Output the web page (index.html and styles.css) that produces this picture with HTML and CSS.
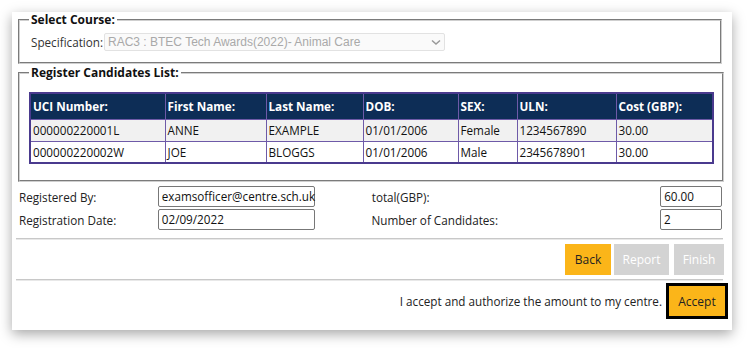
FILE: index.html
```html
<!DOCTYPE html>
<html>
<head>
<meta charset="utf-8">
<link rel="stylesheet" href="styles.css">
</head>
<body>
<div class="card">
  <fieldset class="fs fs-course">
    <legend>Select Course:</legend>
    <div class="spec-row">
      <span class="spec-label">Specification:</span>
      <div class="select">
        <span>RAC3 : BTEC Tech Awards(2022)- Animal Care</span>
        <svg width="10" height="7" viewBox="0 0 10 7"><path d="M1 1.5 L5 5 L9 1.5" fill="none" stroke="#999" stroke-width="1.5"/></svg>
      </div>
    </div>
  </fieldset>
  <fieldset class="fs fs-list">
    <legend>Register Candidates List:</legend>
    <table class="cand">
      <colgroup>
        <col style="width:135px"><col style="width:101px"><col style="width:97px"><col style="width:95px"><col style="width:59px"><col style="width:99px"><col style="width:97px">
      </colgroup>
      <thead>
        <tr><th>UCI Number:</th><th>First Name:</th><th>Last Name:</th><th>DOB:</th><th>SEX:</th><th>ULN:</th><th>Cost (GBP):</th></tr>
      </thead>
      <tbody>
        <tr class="alt"><td>000000220001L</td><td>ANNE</td><td>EXAMPLE</td><td>01/01/2006</td><td>Female</td><td>1234567890</td><td>30.00</td></tr>
        <tr><td>000000220002W</td><td>JOE</td><td>BLOGGS</td><td>01/01/2006</td><td>Male</td><td>2345678901</td><td>30.00</td></tr>
      </tbody>
    </table>
  </fieldset>
  <div class="info">
    <div class="info-row">
      <span class="lbl">Registered By:</span>
      <span class="inp inp-wide">examsofficer@centre.sch.uk</span>
      <span class="lbl lbl2">total(GBP):</span>
      <span class="inp inp-narrow">60.00</span>
    </div>
    <div class="info-row">
      <span class="lbl">Registration Date:</span>
      <span class="inp inp-wide">02/09/2022</span>
      <span class="lbl lbl2">Number of Candidates:</span>
      <span class="inp inp-narrow">2</span>
    </div>
  </div>
  <div class="rule"></div>
  <div class="btn-row">
    <button class="btn btn-primary">Back</button>
    <button class="btn btn-disabled btn-report">Report</button>
    <button class="btn btn-disabled btn-finish">Finish</button>
  </div>
  <div class="rule rule2"></div>
  <div class="accept-row">
    <span class="accept-text">I accept and authorize the amount to my centre.</span>
    <button class="btn btn-primary btn-accept">Accept</button>
  </div>
</div>
</body>
</html>
```
FILE: styles.css
```css
* { box-sizing: border-box; }
html, body { margin: 0; padding: 0; background: #fff; }
body {
  font-family: "Open Sans", "Liberation Sans", sans-serif;
  font-size: 11.7px;
  color: #222;
  width: 750px;
  height: 348px;
  overflow: hidden;
}
.card {
  margin: 12px 0 0 12px;
  width: 720px;
  height: 318px;
  background: #fff;
  box-shadow: 0 4px 12px rgba(0,0,0,0.35);
  padding: 0 10px 0 6px;
}
.fs {
  margin: 0;
  border: 2px groove #cfcfcf;
  padding: 0;
}
.fs legend {
  font-weight: bold;
  font-size: 12px;
  line-height: 16px;
  padding: 0 2px;
  margin-left: 9px;
  color: #111;
}
.fs-course {
  height: 52px;
}
.spec-row {
  display: flex;
  align-items: center;
  padding: 5px 0 0 11px;
  color: #333;
}
.spec-label { width: 73px; }
.select {
  width: 341px;
  height: 18px;
  border: 1px solid #e2e2e2;
  border-radius: 2px;
  background: #fafafa;
  display: flex;
  align-items: center;
  justify-content: space-between;
  padding: 0 3px 0 3px;
  font-family: "Liberation Sans", Arial, sans-serif;
  font-size: 12px;
  color: #a9a9a9;
}
.fs-list {
  margin-top: 1px;
  height: 117px;
  padding: 11px 8px 0 9px;
}
.fs-list legend { margin-left: 0; }
.cand {
  border-collapse: collapse;
  border: 2px solid #4a3a8e;
  width: 683px;
  table-layout: fixed;
}
.cand th, .cand td {
  border: 1px solid #6e5aa8;
  text-align: left;
  padding: 0 2px;
  white-space: nowrap;
  overflow: hidden;
}
.cand th {
  background: #0d2d56;
  color: #fff;
  font-weight: bold;
  height: 26px;
}
.cand td { height: 22px; color: #111; }
.cand tr.alt td { background: #f1f1f1; }
.info {
  padding: 4px 0 0 1px;
  display: flex;
  flex-direction: column;
  gap: 2px;
}
.info-row {
  display: flex;
  align-items: center;
  height: 21px;
}
.lbl { width: 139px; color: #222; }
.lbl2 { width: 289px; margin-left: 57px; }
.inp {
  height: 21px;
  border: 1px solid #777;
  border-radius: 2px;
  padding: 0 1px 0 3px;
  line-height: 19px;
  color: #111;
  white-space: nowrap;
  overflow: visible;
}
.inp-wide { width: 157px; }
.inp-narrow { width: 62px; }
.rule {
  margin: 8px 0 0 -2px;
  width: 707px;
  height: 2px;
  background: #c8c8c8;
  border-bottom: 1px solid #e8e8e8;
}
.btn-row {
  display: flex;
  justify-content: flex-end;
  padding: 4px 0 0 0;
  width: 706px;
  height: 37px;
}
.btn {
  font-family: "Open Sans", "Liberation Sans", sans-serif;
  font-size: 12px;
  border: none;
  margin: 0;
  height: 31px;
  cursor: pointer;
}
.btn-primary { background: #fbb519; color: #222; width: 46px; }
.btn-disabled { background: #d3d3d3; color: #fff; }
.btn-report { width: 55px; margin-left: 3px; }
.btn-finish { width: 50px; margin-left: 5px; }
.rule2 { margin-top: 2px; }
.accept-row {
  display: flex;
  justify-content: flex-end;
  align-items: center;
  padding-top: 2px;
  margin-right: -6px;
}
.accept-text { margin-right: 4px; color: #222; }
.btn-accept {
  width: 62px;
  height: 36px;
  border: 3px solid #000;
  font-size: 12px;
}
```
